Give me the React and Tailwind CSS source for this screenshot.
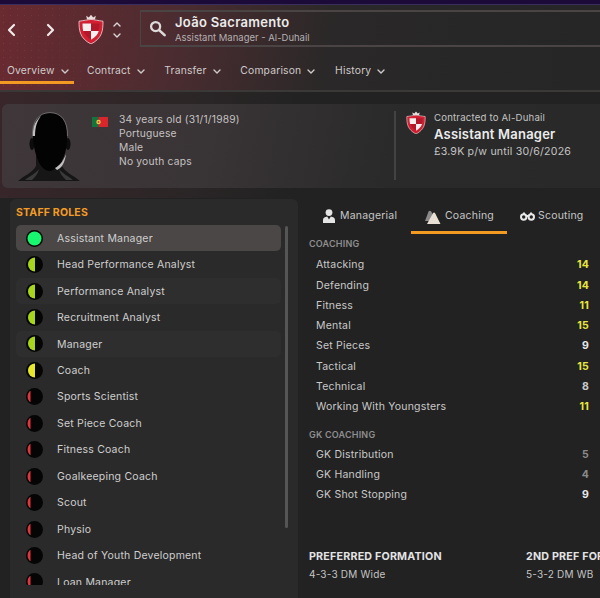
import React from "react";

const Chevron = ({ className = "" }) => (
  <svg viewBox="0 0 8 5" className={`w-2 h-[5px] ${className}`} fill="none" stroke="currentColor" strokeWidth="1.4" strokeLinecap="round" strokeLinejoin="round">
    <path d="M1 1l3 3 3-3" />
  </svg>
);

const Crest = ({ className = "" }) => (
  <svg viewBox="0 0 26 30" className={className}>
    <path d="M9 5.500L8.200 1.800 10.800 3.400 13 .8 15.200 3.400 17.800 1.800 17 5.500z" fill="#e9dcdc" />
    <path d="M1 7.200C6 6.600 9 5.800 13 5.400c4 .4 7 1.200 12 1.800 0 9-.6 17-12 22.800C1.600 24.200 1 16.200 1 7.200z" fill="#d31f31" stroke="#f3d9dc" strokeWidth="0.8" />
    <path d="M4.500 9.500L21.500 9.500C21.500 16 20 21.500 13 25.800 6 21.500 4.500 16 4.500 9.500z" fill="#b3182a" />
    <path d="M4.500 9.500H13V17H5.200C4.700 14.800 4.500 12.400 4.500 9.500zM13 17H20.800C19.800 20.500 17.500 23 13 25.800z" fill="#f5eeee" />
  </svg>
);

const Dot = ({ level }) => {
  const fills = {
    full: { c: "#18f56f", d: null },
    lime: { c: "#a6d51c", d: "M9 1.500A7 7 0 0 0 9 15.500Z" },
    yellow: { c: "#e6e62a", d: "M9 1.500A7 7 0 0 0 9 15.500Z" },
    red: { c: "#e2363f", d: "M4.500 2.800A7 7 0 0 0 4.500 14.200Z" },
  }[level];
  return (
    <svg viewBox="0 0 17 17" className="w-[17px] h-[17px] shrink-0">
      <circle cx="8.500" cy="8.500" r="8.500" fill="#050505" />
      {fills.d ? <path d={fills.d} fill={fills.c} /> : <circle cx="8.500" cy="8.500" r="7" fill={fills.c} />}
    </svg>
  );
};

const roles = [
  ["Assistant Manager", "full"],
  ["Head Performance Analyst", "lime"],
  ["Performance Analyst", "lime"],
  ["Recruitment Analyst", "lime"],
  ["Manager", "lime"],
  ["Coach", "yellow"],
  ["Sports Scientist", "red"],
  ["Set Piece Coach", "red"],
  ["Fitness Coach", "red"],
  ["Goalkeeping Coach", "red"],
  ["Scout", "red"],
  ["Physio", "red"],
  ["Head of Youth Development", "red"],
  ["Loan Manager", "red"],
];

const coaching = [
  ["Attacking", 14, "y"],
  ["Defending", 14, "y"],
  ["Fitness", 11, "y"],
  ["Mental", 15, "y"],
  ["Set Pieces", 9, "w"],
  ["Tactical", 15, "y"],
  ["Technical", 8, "g"],
  ["Working With Youngsters", 11, "y"],
];
const gk = [
  ["GK Distribution", 5, "d"],
  ["GK Handling", 4, "d"],
  ["GK Shot Stopping", 9, "w"],
];
const numCls = { y: "text-[#e8e83c]", w: "text-[#e8e8e8]", g: "text-[#c8c8c8]", d: "text-[#8a8a8a]" };

const AttrRow = ({ a }) => (
  <div className="flex items-center justify-between h-[20.300px] pl-[7px] pr-[11px]">
    <span className="text-[#c9c9c9]">{a[0]}</span>
    <span className={`font-bold ${numCls[a[2]]}`}>{a[1]}</span>
  </div>
);

const tabs = ["Overview", "Contract", "Transfer", "Comparison", "History"];

export default function App() {
  return (
    <div className="relative w-[600px] h-[598px] overflow-hidden bg-[#222222] text-[10.500px] tracking-[0.2px]" style={{ fontFamily: "Inter, 'Liberation Sans', sans-serif" }}>
      {/* top strip */}
      <div className="h-[5px] bg-[#1c0a38] border-b border-[#3a2f5c]" />

      {/* header */}
      <div className="h-[87px] bg-[linear-gradient(100deg,#6a2a30_0%,#4a2c30_30%,#2a2828_55%,#262626_100%)] border-b-2 border-[#3b3838] relative">
        <div className="absolute inset-0 bg-[radial-gradient(#ffffff14_0.7px,transparent_1px)] bg-[length:7px_7px] [mask-image:linear-gradient(90deg,black_0%,transparent_25%)]" />
        <div className="relative flex h-[42px]">
          <div className="flex items-center w-[140px] h-full pl-[7px] pt-[7px]">
            <svg viewBox="0 0 9 14" className="w-[9px] h-[14px] text-[#f0eaea]" fill="none" stroke="currentColor" strokeWidth="2.200" strokeLinecap="round" strokeLinejoin="round"><path d="M7 2L2 7l5 5" /></svg>
            <svg viewBox="0 0 9 14" className="w-[9px] h-[14px] ml-[30px] text-[#f0eaea]" fill="none" stroke="currentColor" strokeWidth="2.200" strokeLinecap="round" strokeLinejoin="round"><path d="M2 2l5 5-5 5" /></svg>
            <Crest className="w-[26px] h-[30px] ml-[23px] -mt-px" />
            <div className="flex flex-col gap-[6px] ml-[9px] text-[#dcd6d6]">
              <Chevron className="rotate-180" />
              <Chevron />
            </div>
          </div>
          <div className="flex-1 h-[37px] mt-[5px] flex items-center border-t-2 border-l border-b-2 border-[#4a4444] pl-[8px]">
            <svg viewBox="0 0 18 18" className="w-[17px] h-[17px] text-[#dedada]" fill="none" stroke="currentColor">
              <circle cx="7" cy="7" r="4.800" strokeWidth="2.400" />
              <path d="M11 11l5.500 5" strokeWidth="2.800" strokeLinecap="round" />
            </svg>
            <div className="ml-[9px] pt-[2px]">
              <div className="text-[13px] leading-[17px] font-semibold text-[#ececec] tracking-[0.3px]">João Sacramento</div>
              <div className="text-[9.500px] leading-[14px] text-[#b5b0b0] tracking-normal">Assistant Manager - Al-Duhail</div>
            </div>
          </div>
        </div>
        <div className="relative flex h-[37px]">
          {tabs.map((t, i) => (
            <div key={t} className={`flex items-center gap-[6px] h-[37px] pt-[14px] border-b-[3px] text-[10.300px] text-[#cfcaca] ${i === 0 ? "pl-[7px] border-[#f29a22] w-[74px]" : "pl-[13px] pr-[6.700px] border-transparent"}`}>
              <span>{t}</span>
              <Chevron />
            </div>
          ))}
        </div>
      </div>

      {/* body background */}
      <div className="bg-[linear-gradient(100deg,#38262a_0%,#2c2627_30%,#222222_50%)] pt-[12px] pb-[10px] pl-[2px]">
        {/* profile card */}
        <div className="flex h-[84px] rounded-l-[6px] bg-[linear-gradient(100deg,#3f3739_0%,#393436_35%,#2a2a2a_65%,#292929_100%)]">
          <svg viewBox="0 0 64 70" className="w-[64px] h-[70px] ml-[15px] mt-[8px] shrink-0">
            <path d="M1 69C8 63 15 61 19 54V44H45V54C49 61 56 63 63 69z" fill="#161616" />
            <path d="M8 68C13 64 18 62 22 57 21 62 18 65 15 68zM56 68C51 64 46 62 42 57 43 62 46 65 49 68z" fill="#3a3a3a" />
            <ellipse cx="15" cy="32" rx="2.500" ry="6" fill="#0c0c0c" />
            <ellipse cx="51" cy="32" rx="2.500" ry="6" fill="#0c0c0c" />
            <path d="M16 26C15 9 22 1 33 1 44 1 51 9 50 26 50 40 46 52 36 58 33 60 29 59 26 56 20 50 17 38 16 26z" fill="#030303" />
            <path d="M15.500 24C15 9 22 .6 33 .6 44 .6 51 9 50.500 24" fill="none" stroke="#7c7878" strokeWidth="0.8" />
            <path d="M16 24C15.500 14 19 8 24 4 20 9 18 15 18 24zM38 56C42 54 46 50 49 42 48 50 45 56 40 58z" fill="#c0c0c0" />
          </svg>
          <svg viewBox="0 0 16 10" className="w-4 h-[10px] ml-[11px] mt-[13px] shrink-0">
            <rect width="6.500" height="10" fill="#13743c" />
            <rect x="6.500" width="9.500" height="10" fill="#d8262c" />
            <circle cx="6.500" cy="5" r="2.200" fill="#e6d24a" />
            <circle cx="6.500" cy="5" r="1" fill="#c43" />
          </svg>
          <div className="ml-[11px] mt-[8px] text-[10.250px] leading-[14px] text-[#c6c2c2] w-[275px] shrink-0">
            <div>34 years old (31/1/1989)</div>
            <div>Portuguese</div>
            <div>Male</div>
            <div>No youth caps</div>
          </div>
          <div className="w-[2px] h-[69px] mt-[7px] bg-[#454243] shrink-0" />
          <Crest className="w-[20px] h-[23px] ml-[10px] mt-[7px] shrink-0" />
          <div className="ml-[8px] mt-[7px]">
            <div className="text-[9.600px] leading-[14px] text-[#c4c4c4]">Contracted to Al-Duhail</div>
            <div className="text-[13px] leading-[19px] font-semibold text-[#ececec]">Assistant Manager</div>
            <div className="text-[10.600px] leading-[15px] text-[#c4c4c4]">£3.9K p/w until 30/6/2026</div>
          </div>
        </div>
      </div>

      {/* lower area */}
      <div className="flex pt-px">
        {/* staff roles */}
        <div className="w-[288px] ml-[10px] h-[400px] rounded-t-[6px] bg-[#2a2a2a] pl-[6px] shrink-0">
          <div className="h-[26px] pt-[7px] text-[10.500px] leading-[13px] font-bold text-[#f59c25]">STAFF ROLES</div>
          <div className="flex">
            <div className="w-[265px] h-[360px] overflow-hidden">
              {roles.map(([name, level], i) => (
                <div key={name} className={`flex items-center h-[26.450px] pl-[10px] rounded-[5px] ${i === 0 ? "bg-[#4a4746]" : i === 2 || i === 4 ? "bg-[#2e2e2e]" : ""}`}>
                  <Dot level={level} />
                  <span className="ml-[14px] pt-px text-[#cfcfcf]">{name}</span>
                </div>
              ))}
            </div>
            <div className="w-[3px] h-[302px] ml-[4px] mt-[1px] rounded-full bg-[#555555]" />
          </div>
        </div>

        {/* right */}
        <div className="flex-1 min-w-0 pl-[11px]">
          <div className="flex h-[35px] w-[300px] text-[#c6c6c6]">
            <div className="flex items-center w-[102px] pl-[14px] pt-[1px] pb-[2px] gap-[5px]">
              <svg viewBox="0 0 12 14" className="w-3 h-[14px]" fill="#e4e4e4"><circle cx="6" cy="3.600" r="3.400" /><path d="M0 14V11C0 9 2 8 4.200 7.600L6 10.500 7.800 7.600C10 8 12 9 12 11V14z" /></svg>
              <span>Managerial</span>
            </div>
            <div className="flex items-center w-[96px] pl-[14px] pt-[2px] gap-[4px] border-b-[3px] border-[#f29a22]">
              <svg viewBox="0 0 16 15" className="w-4 h-[15px]"><path d="M0 12L3 4C3.500 1 6 1 7 4L8 12z" fill="#8a8a8a" /><path d="M2 15L7 6C8 2.500 10 2.500 11 6L15.500 15z" fill="#e8e0d4" /></svg>
              <span>Coaching</span>
            </div>
            <div className="flex items-center pl-[13px] pt-[1px] pb-[2px] gap-[3px] whitespace-nowrap">
              <svg viewBox="0 0 15 9" className="w-[15px] h-[9px]" fill="none" stroke="#e8e8e8" strokeWidth="2"><circle cx="3.700" cy="5" r="2.700" /><circle cx="11.300" cy="5" r="2.700" /><path d="M3 1.500h2M10 1.500h2M6 4h3" /></svg>
              <span>Scouting</span>
            </div>
          </div>
          <div className="mt-[3px] h-[13px] text-[9px] leading-[13px] font-semibold text-[#8e8e8e]">COACHING</div>
          <div className="mt-[5px]">
            {coaching.map((a) => <AttrRow key={a[0]} a={a} />)}
          </div>
          <div className="mt-[11px] h-[13px] text-[9px] leading-[13px] font-semibold text-[#8e8e8e]">GK COACHING</div>
          <div className="mt-[3px]">
            {gk.map((a) => <AttrRow key={a[0]} a={a} />)}
          </div>
          <div className="mt-[45px] flex whitespace-nowrap">
            <div className="w-[217px] shrink-0">
              <div className="font-bold text-[#e4e4e4] text-[10.700px] leading-[14px]">PREFERRED FORMATION</div>
              <div className="mt-[3px] text-[#c4c4c4] text-[10px] leading-[14px]">4-3-3 DM Wide</div>
            </div>
            <div>
              <div className="font-bold text-[#e4e4e4] text-[10.700px] leading-[14px]">2ND PREF FORMATION</div>
              <div className="mt-[3px] text-[#c4c4c4] text-[10px] leading-[14px]">5-3-2 DM WB</div>
            </div>
          </div>
        </div>
      </div>
    </div>
  );
}
